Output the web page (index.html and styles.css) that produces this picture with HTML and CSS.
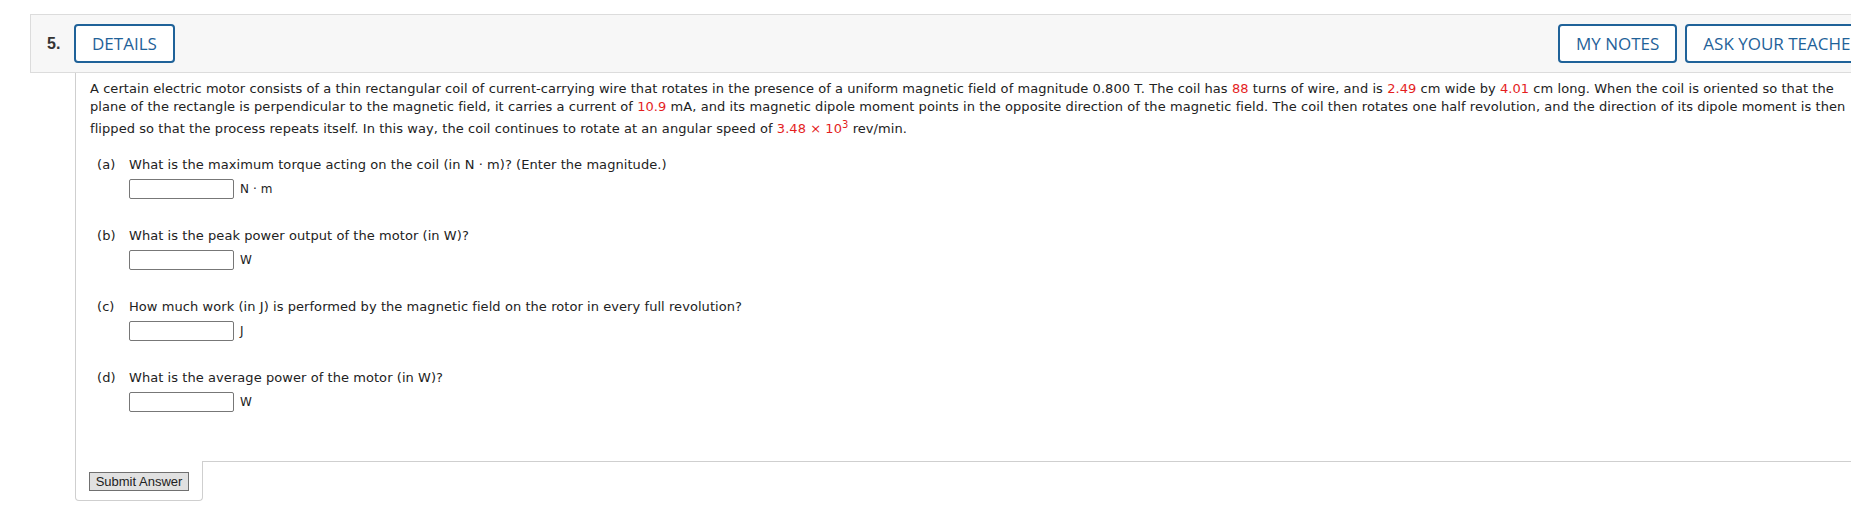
FILE: index.html
```html
<!DOCTYPE html>
<html>
<head>
<meta charset="utf-8">
<title>Question 5</title>
<link rel="stylesheet" href="styles.css">
</head>
<body>
<div class="page">
  <div class="question">
    <div class="q-header">
      <span class="q-num">5.</span>
      <button class="hdr-btn details">DETAILS</button>
      <div class="hdr-right">
        <button class="hdr-btn">MY NOTES</button>
        <button class="hdr-btn">ASK YOUR TEACHER</button>
      </div>
    </div>
    <div class="q-body">
      <p class="intro">A certain electric motor consists of a thin rectangular coil of current-carrying wire that rotates in the presence of a uniform magnetic field of magnitude 0.800 T. The coil has <span class="red">88</span> turns of wire, and is <span class="red">2.49</span> cm wide by <span class="red">4.01</span> cm long. When the coil is oriented so that the plane of the rectangle is perpendicular to the magnetic field, it carries a current of <span class="red">10.9</span> mA, and its magnetic dipole moment points in the opposite direction of the magnetic field. The coil then rotates one half revolution, and the direction of its dipole moment is then flipped so that the process repeats itself. In this way, the coil continues to rotate at an angular speed of <span class="red">3.48 &times; 10<sup>3</sup></span> rev/min.</p>

      <div class="part">
        <div class="part-q"><span class="part-label">(a)</span>What is the maximum torque acting on the coil (in N &middot; m)? (Enter the magnitude.)</div>
        <div class="part-a"><input class="ans" type="text"><span class="unit">N &middot; m</span></div>
      </div>
      <div class="part">
        <div class="part-q"><span class="part-label">(b)</span>What is the peak power output of the motor (in W)?</div>
        <div class="part-a"><input class="ans" type="text"><span class="unit">W</span></div>
      </div>
      <div class="part">
        <div class="part-q"><span class="part-label">(c)</span>How much work (in J) is performed by the magnetic field on the rotor in every full revolution?</div>
        <div class="part-a"><input class="ans" type="text"><span class="unit">J</span></div>
      </div>
      <div class="part">
        <div class="part-q"><span class="part-label">(d)</span>What is the average power of the motor (in W)?</div>
        <div class="part-a"><input class="ans" type="text"><span class="unit">W</span></div>
      </div>
    </div>
    <div class="q-footer">
      <div class="submit-box"><button class="submit">Submit Answer</button></div>
      <div class="footer-fill"></div>
    </div>
  </div>
</div>
</body>
</html>
```
FILE: styles.css
```css
html, body {
  margin: 0;
  padding: 0;
  background: #fff;
  overflow: hidden;
}
.page {
  padding: 14px 0 0 30px;
  width: 1880px;
}
.q-header {
  display: flex;
  align-items: center;
  height: 59px;
  box-sizing: border-box;
  background: #f7f7f7;
  border: 1px solid #dcdcdc;
  padding: 0 30px 0 16px;
}
.q-num {
  font-family: "Liberation Sans", Arial, sans-serif;
  font-weight: bold;
  font-size: 16px;
  color: #333;
  width: 27px;
}
.hdr-btn {
  font-family: "Open Sans", sans-serif;
  font-size: 17px;
  color: #1f6299;
  background: #fff;
  border: 2px solid #1f6299;
  border-radius: 4px;
  height: 39px;
  padding: 0 16px;
  margin: 0;
  line-height: 35px;
}
.hdr-right {
  margin-left: auto;
  display: flex;
  gap: 8px;
}
.q-body {
  margin-left: 45px;
  border-left: 1px solid #cfcfcf;
  padding: 7px 55px 49px 14px;
  font-family: "DejaVu Sans", Verdana, sans-serif;
  font-size: 13px;
  letter-spacing: 0.065px;
  line-height: 18px;
  color: #222;
}
.intro {
  margin: 0 0 18px;
}
.red {
  color: #e41e1e;
}
sup {
  font-size: 10px;
}
.part {
  padding-left: 7px;
  margin-bottom: 28px;
}
.part:last-child {
  margin-bottom: 0;
}
.part-q {
  display: flex;
  margin-bottom: 5px;
}
.part-label {
  width: 32px;
  flex: none;
}
.part-a {
  display: flex;
  align-items: center;
  padding-left: 32px;
}
.ans {
  width: 105px;
  height: 20px;
  box-sizing: border-box;
  border: 1px solid #777;
  border-radius: 2px;
  margin: 0;
  padding: 0;
  background: #fff;
}
.unit {
  margin-left: 6px;
  font-size: 12px;
}
.q-footer {
  display: flex;
  margin-left: 45px;
}
.submit-box {
  width: 128px;
  box-sizing: border-box;
  height: 40px;
  border: 1px solid #cfcfcf;
  border-top: none;
  border-radius: 0 0 4px 4px;
  padding: 11px 0 0 13px;
}
.footer-fill {
  flex: 1;
  border-top: 1px solid #cfcfcf;
}
.submit {
  font-family: "Liberation Sans", Arial, sans-serif;
  font-size: 13px;
  color: #222;
  width: 100px;
  height: 19px;
  padding: 0;
  margin: 0;
  background: #e1e1e1;
  border: 1px solid #707070;
  border-radius: 0;
}
```
